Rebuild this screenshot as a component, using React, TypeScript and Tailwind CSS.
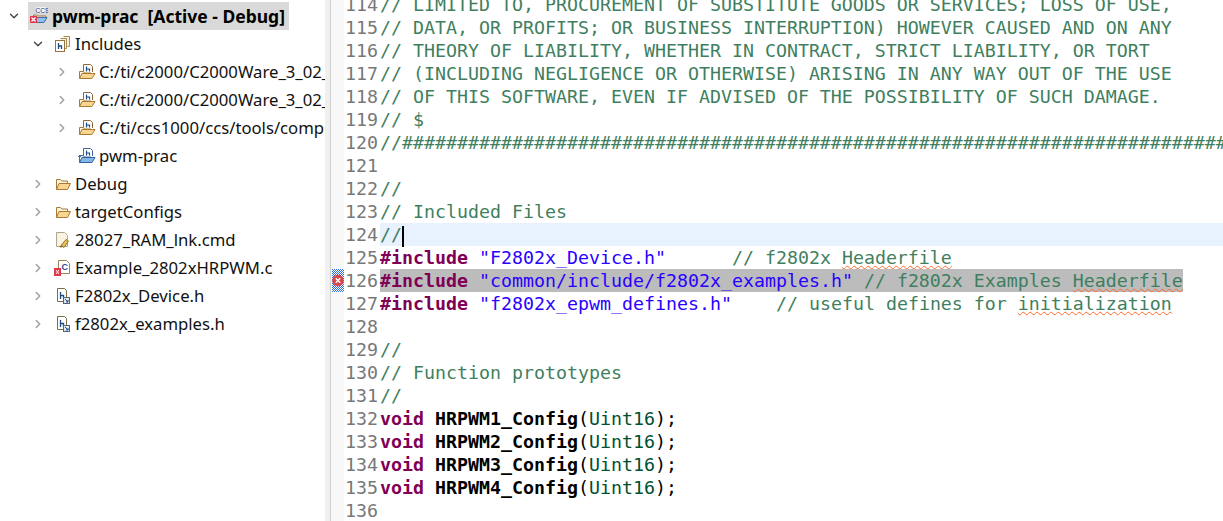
import React from 'react';
import { ChevronDown, ChevronRight } from 'lucide-react';

const Folder = () => (
  <svg width="18" height="18" viewBox="0 0 18 18">
    <path d="M2.500 14.500V4.500h4l1.500 1.500h5.500v2.500" fill="#fdf3dc" stroke="#a87a35" />
    <path d="M2.500 14.500l2.500-6h11.500l-3 6z" fill="#f8d690" stroke="#a87a35" />
  </svg>
);

const IncludeFolder = ({ blue }: { blue?: boolean }) => (
  <svg width="18" height="18" viewBox="0 0 18 18">
    <path d="M5.500 9V1.500h7l2 2V9" fill="#fff" stroke={blue ? '#3f659c' : '#8a6a3a'} />
    <path d="M8.500 3.500v5M8.500 6h3V8.500" fill="none" stroke="#1f4a80" strokeWidth="1.200" />
    <path d="M1.500 15.500V8.500h4l1 1.500h6.500v1" fill="#fdf3dc" stroke={blue ? '#3f70ad' : '#a87a35'} />
    <path d="M1.500 15.500l2.500-5h13l-3 5z" fill={blue ? '#84b6e6' : '#f8d690'} stroke={blue ? '#2f64a0' : '#a87a35'} />
    {blue && <path d="M0 9.500h3M1.500 8v3" stroke="#3f70ad" />}
  </svg>
);

const Includes = () => (
  <svg width="18" height="18" viewBox="0 0 18 18">
    <path d="M9.500 1.500h6v10h-2" fill="#f8efdc" stroke="#a88c58" />
    <path d="M6.500 3.500h6v10h-2" fill="#f8efdc" stroke="#a88c58" />
    <rect x="1.500" y="5.500" width="9" height="11" fill="#fff" stroke="#96743c" />
    <path d="M4.500 8v6M4.500 11h3v3" fill="none" stroke="#1f4a80" strokeWidth="1.300" />
  </svg>
);

const ProjectIcon = () => (
  <svg width="20" height="24" viewBox="0 0 20 24">
    <path d="M5.500 18V11h3l1 1h8.500v2" fill="#fdf3dc" stroke="#96743c" />
    <path d="M6 18.500l3-5h10l-3 5z" fill="#8fbfea" stroke="#3f70a8" />
    <rect x="8" y="3" width="10" height="6" fill="#eef2f8" />
    <text x="7.500" y="8.500" fontSize="6.500" fontFamily="'Liberation Sans', sans-serif" fill="#1f3f7a">CCS</text>
    <rect x="2" y="12" width="7" height="7" fill="#e0374a" />
    <path d="M3.500 13.500l4 4M7.500 13.500l-4 4" stroke="#fff" strokeWidth="1.200" />
  </svg>
);

const LinkFile = () => (
  <svg width="18" height="18" viewBox="0 0 18 18">
    <path d="M2.500 1.500h8l3 3v11h-11z" fill="#faf3e4" stroke="#b0a58e" />
    <path d="M7 14.500l5-6 2.500 1.500-4.500 6.500z" fill="#e9c15a" stroke="#96741f" />
    <path d="M6 16l2.500-1" stroke="#8a6a20" strokeWidth="1.500" />
  </svg>
);

const CFile = () => (
  <svg width="18" height="18" viewBox="0 0 18 18">
    <path d="M4.500 1.500h8l3 3v10h-11z" fill="#fff" stroke="#96845a" />
    <text x="7.500" y="11" fontSize="9" fontWeight="700" fontFamily="'Liberation Sans', sans-serif" fill="#2f4f9a">C</text>
    <rect x="0" y="9" width="7" height="8" fill="#e0374a" />
    <path d="M2 11l3 4M5 11l-3 4" stroke="#fff" />
  </svg>
);

const HeaderFile = () => (
  <svg width="18" height="18" viewBox="0 0 18 18">
    <path d="M3.500 1.500h7l2 2v11h-9z" fill="#fff" stroke="#7d6c48" />
    <path d="M6.500 5v7M6.500 8.500h3V12" fill="none" stroke="#1f4a80" strokeWidth="1.300" />
    <rect x="9.500" y="10.500" width="6" height="6" fill="#dfe7f2" stroke="#52647e" />
    <path d="M11 12l3 3M14 15v-2M14 15h-2" fill="none" stroke="#2f4a70" />
  </svg>
);

type Row = { label: string; depth: number; open?: boolean; leaf?: boolean; icon: React.ReactNode };

const rows: Row[] = [
  { label: 'Includes', depth: 1, open: true, icon: <Includes /> },
  { label: 'C:/ti/c2000/C2000Ware_3_02_00_00/device_support/f2802x', depth: 2, icon: <IncludeFolder /> },
  { label: 'C:/ti/c2000/C2000Ware_3_02_00_00/libraries/math', depth: 2, icon: <IncludeFolder /> },
  { label: 'C:/ti/ccs1000/ccs/tools/compiler/ti-cgt-c2000', depth: 2, icon: <IncludeFolder /> },
  { label: 'pwm-prac', depth: 2, leaf: true, icon: <IncludeFolder blue /> },
  { label: 'Debug', depth: 1, icon: <Folder /> },
  { label: 'targetConfigs', depth: 1, icon: <Folder /> },
  { label: '28027_RAM_lnk.cmd', depth: 1, icon: <LinkFile /> },
  { label: 'Example_2802xHRPWM.c', depth: 1, icon: <CFile /> },
  { label: 'F2802x_Device.h', depth: 1, icon: <HeaderFile /> },
  { label: 'f2802x_examples.h', depth: 1, icon: <HeaderFile /> },
];

function TreeRow({ row }: { row: Row }) {
  return (
    <div className={`flex items-center h-[28px] whitespace-nowrap ${row.depth === 1 ? 'pl-[31px]' : 'pl-[55px]'}`}>
      <span className="w-[14px] flex-shrink-0 flex justify-center">
        {row.leaf ? null : row.open ? (
          <ChevronDown className="w-[14px] h-[14px] text-[#4a4a4a]" strokeWidth={2.5} />
        ) : (
          <ChevronRight className="w-[14px] h-[14px] text-[#a0a0a0]" strokeWidth={2.5} />
        )}
      </span>
      <span className="w-[18px] ml-[9px] flex-shrink-0">{row.icon}</span>
      <span className="ml-[3px]">{row.label}</span>
    </div>
  );
}

const C = ({ children }: { children: React.ReactNode }) => <span className="text-[#3f7f5f]">{children}</span>;
const K = ({ children }: { children: React.ReactNode }) => <span className="text-[#7f0055] font-bold">{children}</span>;
const S = ({ children }: { children: React.ReactNode }) => <span className="text-[#2a00ff]">{children}</span>;
const Sq = ({ children }: { children: React.ReactNode }) => (
  <span className="underline decoration-wavy decoration-[#ff6a2a] decoration-1 underline-offset-1">{children}</span>
);

function ProtoLine({ n }: { n: number }) {
  return (
    <>
      <K>void</K> <span className="font-bold text-black">{`HRPWM${n}_Config`}</span>(<span className="text-[#005032]">Uint16</span>);
    </>
  );
}

type Line = { n: number; body?: React.ReactNode; cls?: string };

const lines: Line[] = [
  { n: 114, body: <C>// LIMITED TO, PROCUREMENT OF SUBSTITUTE GOODS OR SERVICES; LOSS OF USE,</C> },
  { n: 115, body: <C>// DATA, OR PROFITS; OR BUSINESS INTERRUPTION) HOWEVER CAUSED AND ON ANY</C> },
  { n: 116, body: <C>// THEORY OF LIABILITY, WHETHER IN CONTRACT, STRICT LIABILITY, OR TORT</C> },
  { n: 117, body: <C>// (INCLUDING NEGLIGENCE OR OTHERWISE) ARISING IN ANY WAY OUT OF THE USE</C> },
  { n: 118, body: <C>// OF THIS SOFTWARE, EVEN IF ADVISED OF THE POSSIBILITY OF SUCH DAMAGE.</C> },
  { n: 119, body: <C>// $</C> },
  { n: 120, body: <C>{'//' + '#'.repeat(90)}</C> },
  { n: 121 },
  { n: 122, body: <C>//</C> },
  { n: 123, body: <C>// Included Files</C> },
  {
    n: 124,
    cls: 'bg-[#e8f2fe]',
    body: (
      <>
        <C>//</C>
        <span className="inline-block w-[2px] h-[21px] bg-black align-middle" />
      </>
    ),
  },
  { n: 125, body: <><K>#include</K> <S>"F2802x_Device.h"</S>      <C>// f2802x <Sq>Headerfile</Sq></C></> },
  {
    n: 126,
    body: (
      <span className="bg-[#bcbcbc] inline-block h-[23px]">
        <K>#include</K> <S>"common/include/f2802x_examples.h"</S> <C>// f2802x Examples <Sq>Headerfile</Sq></C>
      </span>
    ),
  },
  { n: 127, body: <><K>#include</K> <S>"f2802x_epwm_defines.h"</S>    <C>// useful defines for <Sq>initialization</Sq></C></> },
  { n: 128 },
  { n: 129, body: <C>//</C> },
  { n: 130, body: <C>// Function prototypes</C> },
  { n: 131, body: <C>//</C> },
  { n: 132, body: <ProtoLine n={1} /> },
  { n: 133, body: <ProtoLine n={2} /> },
  { n: 134, body: <ProtoLine n={3} /> },
  { n: 135, body: <ProtoLine n={4} /> },
  { n: 136 },
];

const ErrorMarker = () => (
  <svg width="12" height="23" viewBox="0 0 12 23">
    <defs>
      <pattern id="chk" width="2" height="2" patternUnits="userSpaceOnUse">
        <rect width="2" height="2" fill="#ffffff" />
        <rect width="1" height="1" fill="#2f70d8" />
        <rect x="1" y="1" width="1" height="1" fill="#2f70d8" />
      </pattern>
    </defs>
    <rect width="12" height="23" fill="url(#chk)" />
    <circle cx="6" cy="11.500" r="5.800" fill="#d8454a" />
    <path d="M3.800 9.300l4.400 4.400M8.200 9.300l-4.400 4.400" stroke="#fff" strokeWidth="1.500" />
  </svg>
);

export default function App() {
  return (
    <div className="w-[1223px] h-[521px] flex overflow-hidden bg-white">
      <div className="w-[325px] flex-shrink-0 overflow-hidden text-[16.7px] text-[#111] font-['Noto_Sans','Open_Sans',sans-serif]">
        <div className="flex items-center h-[28px] mt-[2px] pl-[7px] whitespace-nowrap">
          <ChevronDown className="w-[14px] h-[14px] text-[#4a4a4a]" strokeWidth={2.5} />
          <div className="ml-[7px] h-[28px] w-[261px] bg-[#d9d9d9] flex items-center">
            <ProjectIcon />
            <span className="ml-[4px] text-[17.5px] font-bold whitespace-pre text-black">pwm-prac  [Active - Debug]</span>
          </div>
        </div>
        {rows.map((row) => (
          <TreeRow key={row.label} row={row} />
        ))}
      </div>
      <div className="w-[6px] flex-shrink-0 bg-[#f0f0f0] border-r border-[#d0d0d0]" />
      <div className="flex-1 min-w-0 overflow-hidden">
        <div className="-mt-[7px] font-['DejaVu_Sans_Mono',monospace] text-[18.27px] leading-[23px] text-black">
          {lines.map((line) => (
            <div key={line.n} className="flex h-[23px] whitespace-pre">
              <div className="w-[13px] flex-shrink-0 bg-[#f8f8f8] flex justify-end">
                {line.n === 126 && <ErrorMarker />}
              </div>
              <div className="w-[34px] flex-shrink-0 text-right text-[#787878]">{line.n}</div>
              <div className={`flex-1 min-w-0 ml-[2px] ${line.cls ?? ''}`}>{line.body}</div>
            </div>
          ))}
        </div>
      </div>
    </div>
  );
}
